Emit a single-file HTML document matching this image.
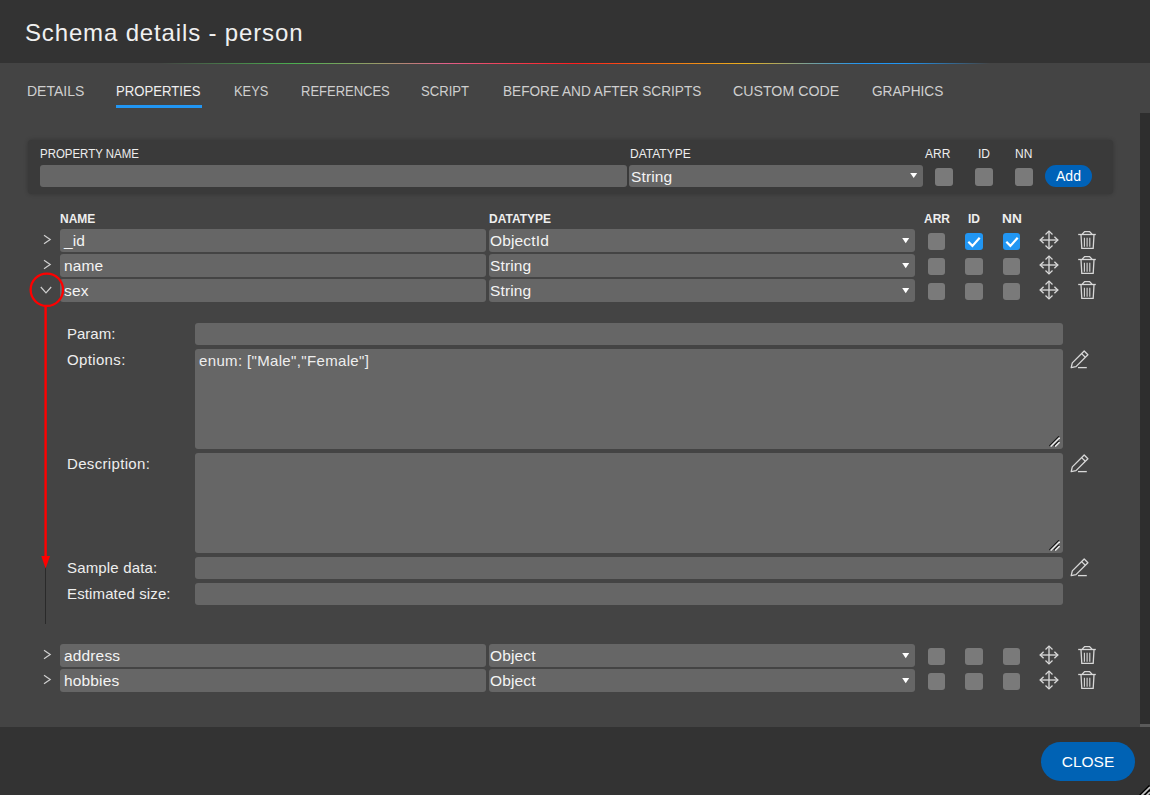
<!DOCTYPE html>
<html><head><meta charset="utf-8">
<style>
*{box-sizing:border-box;margin:0;padding:0}
html,body{width:1150px;height:795px;overflow:hidden;background:#333333;font-family:"Liberation Sans",sans-serif;color:#eeeeee}
.abs{position:absolute}
#hdr{left:0;top:0;width:1150px;height:63px;background:#333333}
#title{left:25px;top:18px;font-size:24px;line-height:30px;color:#f0f0f0;white-space:nowrap;letter-spacing:0.85px}
#grad{left:0;top:63px;width:1150px;height:1px;background:linear-gradient(to right,rgba(76,175,80,0) 160px,#4caf50 295px,#9a9a6a 380px,#e0608a 445px,#ff1c1c 575px,#f47810 670px,#e8b020 745px,#80a090 805px,#2196f3 860px,#2196f3 905px,rgba(33,150,243,0) 990px)}
#content{left:0;top:63px;width:1150px;height:664px;background:#444444}
#sb{left:1140px;top:113px;width:10px;height:614px;background:#2e2e2e}
#sbb{left:1140px;top:724px;width:10px;height:3px;background:#5a5a5a}
#footer{left:0;top:727px;width:1150px;height:68px;background:#333333}
.tab{position:absolute;font-size:15.5px;line-height:18px;color:#cfcfcf;white-space:nowrap}
.tab.act{color:#f0f0f0}
#uline{left:116px;top:105px;width:86px;height:3px;background:#2196f3}
#panel{left:28px;top:140px;width:1085px;height:54px;background:#3a3a3a;border-radius:4px;box-shadow:0 0 4px rgba(0,0,0,0.25)}
.lbl{position:absolute;font-size:12px;line-height:14px;color:#eeeeee;white-space:nowrap}
.lblb{font-weight:bold}
.inp{position:absolute;background:#666666;border-radius:3px;height:22px}
.txt{position:absolute;font-size:15.5px;line-height:20px;color:#f4f4f4;white-space:nowrap;letter-spacing:0.15px}
.cb{position:absolute;width:18px;height:18px;background:#7a7a7a;border-radius:3px}
.cb.on{background:#2196f3}
.arrow{position:absolute;width:0;height:0;border-left:3.5px solid transparent;border-right:3.5px solid transparent;border-top:6px solid #ffffff}
#add{left:1045px;top:165px;width:47px;height:22px;background:#0062b8;border-radius:11px;color:#fff;font-size:14px;line-height:22px;text-align:center}
#close{left:1041px;top:742px;width:94px;height:39px;background:#0062b4;border-radius:20px;color:#fff;font-size:15.5px;line-height:39px;text-align:center}
.flbl{position:absolute;font-size:15px;line-height:18px;color:#eeeeee;white-space:nowrap}
</style></head><body>
<div id="hdr" class="abs"></div>
<div id="title" class="abs">Schema details - person</div>
<div id="content" class="abs"></div>
<div id="grad" class="abs"></div>
<div id="sb" class="abs"></div>
<div id="sbb" class="abs"></div>
<div id="footer" class="abs"></div>
<div class="tab" style="left:27px;top:81.5px;transform:scaleX(0.9029);transform-origin:0 0;">DETAILS</div>
<div class="tab act" style="left:116px;top:81.5px;transform:scaleX(0.8477);transform-origin:0 0;">PROPERTIES</div>
<div class="tab" style="left:234px;top:81.5px;transform:scaleX(0.8313);transform-origin:0 0;">KEYS</div>
<div class="tab" style="left:301px;top:81.5px;transform:scaleX(0.8381);transform-origin:0 0;">REFERENCES</div>
<div class="tab" style="left:421px;top:81.5px;transform:scaleX(0.8448);transform-origin:0 0;">SCRIPT</div>
<div class="tab" style="left:503px;top:81.5px;transform:scaleX(0.8787);transform-origin:0 0;">BEFORE AND AFTER SCRIPTS</div>
<div class="tab" style="left:733px;top:81.5px;transform:scaleX(0.9155);transform-origin:0 0;">CUSTOM CODE</div>
<div class="tab" style="left:872px;top:81.5px;transform:scaleX(0.8806);transform-origin:0 0;">GRAPHICS</div>
<div id="uline" class="abs"></div>
<div id="panel" class="abs"></div>
<div class="lbl" style="left:40px;top:147px;transform:scaleX(0.954);transform-origin:0 0;">PROPERTY NAME</div>
<div class="lbl" style="left:630px;top:147px">DATATYPE</div>
<div class="lbl" style="left:925px;top:147px">ARR</div>
<div class="lbl" style="left:978px;top:147px">ID</div>
<div class="lbl" style="left:1015px;top:147px">NN</div>
<div class="inp" style="left:40px;top:165px;width:587px"></div>
<div class="inp" style="left:629px;top:165px;width:294px"></div>
<div class="txt" style="left:631px;top:167px">String</div>
<svg class="abs" style="left:0;top:0;overflow:visible" width="1" height="1"><polygon points="910.2,172.9 917.2,172.9 913.7,178.1" fill="#fff"/></svg>
<div class="cb" style="left:935px;top:168px;width:18px;height:18px"></div>
<div class="cb" style="left:975px;top:168px;width:18px;height:18px"></div>
<div class="cb" style="left:1015px;top:168px;width:18px;height:18px"></div>
<div id="add" class="abs">Add</div>
<div class="lblb lbl" style="left:60px;top:212px">NAME</div>
<div class="lblb lbl" style="left:489px;top:212px">DATATYPE</div>
<div class="lblb lbl" style="left:924px;top:212px">ARR</div>
<div class="lblb lbl" style="left:968px;top:212px">ID</div>
<div class="lblb lbl" style="left:1002px;top:212px;transform:scaleX(1.14);transform-origin:0 0">NN</div>
<svg class="abs" style="left:42.5px;top:233.7px" width="9" height="11" viewBox="0 0 9 11"><polyline points="1,1.2 7.2,5.5 1,9.8" fill="none" stroke="#cfcfcf" stroke-width="1.2"/></svg>
<div class="inp" style="left:60px;top:229px;width:426px;height:22.5px"></div>
<div class="txt" style="left:64px;top:230.5px">_id</div>
<div class="inp" style="left:489px;top:229px;width:426px;height:22.5px"></div>
<div class="txt" style="left:490px;top:231px">ObjectId</div>
<svg class="abs" style="left:0;top:0;overflow:visible" width="1" height="1"><polygon points="902.2,238 909.2,238 905.7,243.2" fill="#fff"/></svg>
<div class="cb" style="left:928px;top:233px;width:17px;height:17px"></div>
<div class="cb on" style="left:965px;top:233px;width:18px;height:17px"><svg width="17" height="17" viewBox="0 0 17 17" style="position:absolute;left:0;top:0"><polyline points="3.3,8.8 7.4,12.9 14.7,4.7" fill="none" stroke="#fff" stroke-width="2.2"/></svg></div>
<div class="cb on" style="left:1003px;top:233px;width:17px;height:17px"><svg width="17" height="17" viewBox="0 0 17 17" style="position:absolute;left:0;top:0"><polyline points="3.3,8.8 7.4,12.9 14.7,4.7" fill="none" stroke="#fff" stroke-width="2.2"/></svg></div>
<svg class="abs" style="left:1039px;top:230px" width="20" height="20" viewBox="0 0 20 20"><g fill="none" stroke="#d8d8d8" stroke-width="1.35" stroke-linecap="butt" stroke-linejoin="miter"><line x1="0.9" y1="10" x2="19.1" y2="10"/><line x1="10" y1="0.9" x2="10" y2="19.1"/><polyline points="4.6,6.7 1.2,10 4.6,13.3"/><polyline points="15.4,6.7 18.8,10 15.4,13.3"/><polyline points="6.5,4.4 10,1.1 13.5,4.4"/><polyline points="6.5,15.6 10,18.9 13.5,15.6"/></g></svg>
<svg class="abs" style="left:1078px;top:229.8px" width="19" height="20" viewBox="0 0 19 20"><g fill="none" stroke="#d8d8d8" stroke-width="1.3" stroke-linejoin="miter"><path d="M4.2,4.2 L6.6,1.6 H11.6 L14,4.2"/><line x1="0.2" y1="4.5" x2="17.8" y2="4.5"/><path d="M3,4.7 L3.8,18.3 H15.2 L16,4.7"/><line x1="6.4" y1="7.7" x2="6.4" y2="16.7" stroke-width="1.1"/><line x1="9.1" y1="7.7" x2="9.1" y2="16.7" stroke-width="1.1"/><line x1="11.8" y1="7.7" x2="11.8" y2="16.7" stroke-width="1.1"/></g></svg>
<svg class="abs" style="left:42.5px;top:258.7px" width="9" height="11" viewBox="0 0 9 11"><polyline points="1,1.2 7.2,5.5 1,9.8" fill="none" stroke="#cfcfcf" stroke-width="1.2"/></svg>
<div class="inp" style="left:60px;top:254px;width:426px;height:22.5px"></div>
<div class="txt" style="left:64px;top:255.5px">name</div>
<div class="inp" style="left:489px;top:254px;width:426px;height:22.5px"></div>
<div class="txt" style="left:490px;top:256px">String</div>
<svg class="abs" style="left:0;top:0;overflow:visible" width="1" height="1"><polygon points="902.2,263 909.2,263 905.7,268.2" fill="#fff"/></svg>
<div class="cb" style="left:928px;top:258px;width:17px;height:17px"></div>
<div class="cb" style="left:965px;top:258px;width:18px;height:17px"></div>
<div class="cb" style="left:1003px;top:258px;width:17px;height:17px"></div>
<svg class="abs" style="left:1039px;top:255px" width="20" height="20" viewBox="0 0 20 20"><g fill="none" stroke="#d8d8d8" stroke-width="1.35" stroke-linecap="butt" stroke-linejoin="miter"><line x1="0.9" y1="10" x2="19.1" y2="10"/><line x1="10" y1="0.9" x2="10" y2="19.1"/><polyline points="4.6,6.7 1.2,10 4.6,13.3"/><polyline points="15.4,6.7 18.8,10 15.4,13.3"/><polyline points="6.5,4.4 10,1.1 13.5,4.4"/><polyline points="6.5,15.6 10,18.9 13.5,15.6"/></g></svg>
<svg class="abs" style="left:1078px;top:254.8px" width="19" height="20" viewBox="0 0 19 20"><g fill="none" stroke="#d8d8d8" stroke-width="1.3" stroke-linejoin="miter"><path d="M4.2,4.2 L6.6,1.6 H11.6 L14,4.2"/><line x1="0.2" y1="4.5" x2="17.8" y2="4.5"/><path d="M3,4.7 L3.8,18.3 H15.2 L16,4.7"/><line x1="6.4" y1="7.7" x2="6.4" y2="16.7" stroke-width="1.1"/><line x1="9.1" y1="7.7" x2="9.1" y2="16.7" stroke-width="1.1"/><line x1="11.8" y1="7.7" x2="11.8" y2="16.7" stroke-width="1.1"/></g></svg>
<svg class="abs" style="left:40px;top:286px" width="12" height="8" viewBox="0 0 12 8"><polyline points="0.8,1 6,6.8 11.2,1" fill="none" stroke="#cfcfcf" stroke-width="1.2"/></svg>
<div class="inp" style="left:60px;top:279px;width:426px;height:22.5px"></div>
<div class="txt" style="left:64px;top:280.5px">sex</div>
<div class="inp" style="left:489px;top:279px;width:426px;height:22.5px"></div>
<div class="txt" style="left:490px;top:281px">String</div>
<svg class="abs" style="left:0;top:0;overflow:visible" width="1" height="1"><polygon points="902.2,288 909.2,288 905.7,293.2" fill="#fff"/></svg>
<div class="cb" style="left:928px;top:283px;width:17px;height:17px"></div>
<div class="cb" style="left:965px;top:283px;width:18px;height:17px"></div>
<div class="cb" style="left:1003px;top:283px;width:17px;height:17px"></div>
<svg class="abs" style="left:1039px;top:280px" width="20" height="20" viewBox="0 0 20 20"><g fill="none" stroke="#d8d8d8" stroke-width="1.35" stroke-linecap="butt" stroke-linejoin="miter"><line x1="0.9" y1="10" x2="19.1" y2="10"/><line x1="10" y1="0.9" x2="10" y2="19.1"/><polyline points="4.6,6.7 1.2,10 4.6,13.3"/><polyline points="15.4,6.7 18.8,10 15.4,13.3"/><polyline points="6.5,4.4 10,1.1 13.5,4.4"/><polyline points="6.5,15.6 10,18.9 13.5,15.6"/></g></svg>
<svg class="abs" style="left:1078px;top:279.8px" width="19" height="20" viewBox="0 0 19 20"><g fill="none" stroke="#d8d8d8" stroke-width="1.3" stroke-linejoin="miter"><path d="M4.2,4.2 L6.6,1.6 H11.6 L14,4.2"/><line x1="0.2" y1="4.5" x2="17.8" y2="4.5"/><path d="M3,4.7 L3.8,18.3 H15.2 L16,4.7"/><line x1="6.4" y1="7.7" x2="6.4" y2="16.7" stroke-width="1.1"/><line x1="9.1" y1="7.7" x2="9.1" y2="16.7" stroke-width="1.1"/><line x1="11.8" y1="7.7" x2="11.8" y2="16.7" stroke-width="1.1"/></g></svg>
<svg class="abs" style="left:42.5px;top:648.7px" width="9" height="11" viewBox="0 0 9 11"><polyline points="1,1.2 7.2,5.5 1,9.8" fill="none" stroke="#cfcfcf" stroke-width="1.2"/></svg>
<div class="inp" style="left:60px;top:644px;width:426px;height:22.5px"></div>
<div class="txt" style="left:64px;top:645.5px">address</div>
<div class="inp" style="left:489px;top:644px;width:426px;height:22.5px"></div>
<div class="txt" style="left:490px;top:646px">Object</div>
<svg class="abs" style="left:0;top:0;overflow:visible" width="1" height="1"><polygon points="902.2,653 909.2,653 905.7,658.2" fill="#fff"/></svg>
<div class="cb" style="left:928px;top:648px;width:17px;height:17px"></div>
<div class="cb" style="left:965px;top:648px;width:18px;height:17px"></div>
<div class="cb" style="left:1003px;top:648px;width:17px;height:17px"></div>
<svg class="abs" style="left:1039px;top:645px" width="20" height="20" viewBox="0 0 20 20"><g fill="none" stroke="#d8d8d8" stroke-width="1.35" stroke-linecap="butt" stroke-linejoin="miter"><line x1="0.9" y1="10" x2="19.1" y2="10"/><line x1="10" y1="0.9" x2="10" y2="19.1"/><polyline points="4.6,6.7 1.2,10 4.6,13.3"/><polyline points="15.4,6.7 18.8,10 15.4,13.3"/><polyline points="6.5,4.4 10,1.1 13.5,4.4"/><polyline points="6.5,15.6 10,18.9 13.5,15.6"/></g></svg>
<svg class="abs" style="left:1078px;top:644.8px" width="19" height="20" viewBox="0 0 19 20"><g fill="none" stroke="#d8d8d8" stroke-width="1.3" stroke-linejoin="miter"><path d="M4.2,4.2 L6.6,1.6 H11.6 L14,4.2"/><line x1="0.2" y1="4.5" x2="17.8" y2="4.5"/><path d="M3,4.7 L3.8,18.3 H15.2 L16,4.7"/><line x1="6.4" y1="7.7" x2="6.4" y2="16.7" stroke-width="1.1"/><line x1="9.1" y1="7.7" x2="9.1" y2="16.7" stroke-width="1.1"/><line x1="11.8" y1="7.7" x2="11.8" y2="16.7" stroke-width="1.1"/></g></svg>
<svg class="abs" style="left:42.5px;top:673.7px" width="9" height="11" viewBox="0 0 9 11"><polyline points="1,1.2 7.2,5.5 1,9.8" fill="none" stroke="#cfcfcf" stroke-width="1.2"/></svg>
<div class="inp" style="left:60px;top:669px;width:426px;height:22.5px"></div>
<div class="txt" style="left:64px;top:670.5px">hobbies</div>
<div class="inp" style="left:489px;top:669px;width:426px;height:22.5px"></div>
<div class="txt" style="left:490px;top:671px">Object</div>
<svg class="abs" style="left:0;top:0;overflow:visible" width="1" height="1"><polygon points="902.2,678 909.2,678 905.7,683.2" fill="#fff"/></svg>
<div class="cb" style="left:928px;top:673px;width:17px;height:17px"></div>
<div class="cb" style="left:965px;top:673px;width:18px;height:17px"></div>
<div class="cb" style="left:1003px;top:673px;width:17px;height:17px"></div>
<svg class="abs" style="left:1039px;top:670px" width="20" height="20" viewBox="0 0 20 20"><g fill="none" stroke="#d8d8d8" stroke-width="1.35" stroke-linecap="butt" stroke-linejoin="miter"><line x1="0.9" y1="10" x2="19.1" y2="10"/><line x1="10" y1="0.9" x2="10" y2="19.1"/><polyline points="4.6,6.7 1.2,10 4.6,13.3"/><polyline points="15.4,6.7 18.8,10 15.4,13.3"/><polyline points="6.5,4.4 10,1.1 13.5,4.4"/><polyline points="6.5,15.6 10,18.9 13.5,15.6"/></g></svg>
<svg class="abs" style="left:1078px;top:669.8px" width="19" height="20" viewBox="0 0 19 20"><g fill="none" stroke="#d8d8d8" stroke-width="1.3" stroke-linejoin="miter"><path d="M4.2,4.2 L6.6,1.6 H11.6 L14,4.2"/><line x1="0.2" y1="4.5" x2="17.8" y2="4.5"/><path d="M3,4.7 L3.8,18.3 H15.2 L16,4.7"/><line x1="6.4" y1="7.7" x2="6.4" y2="16.7" stroke-width="1.1"/><line x1="9.1" y1="7.7" x2="9.1" y2="16.7" stroke-width="1.1"/><line x1="11.8" y1="7.7" x2="11.8" y2="16.7" stroke-width="1.1"/></g></svg>

<div class="flbl" style="left:67px;top:325px">Param:</div>
<div class="inp" style="left:195px;top:323px;width:868px"></div>
<div class="flbl" style="left:67px;top:351px;letter-spacing:0.35px">Options:</div>
<div class="inp" style="left:195px;top:349px;width:868px;height:100px"></div>
<div class="flbl" style="left:199px;top:352px;letter-spacing:0.35px">enum: ["Male","Female"]</div>
<svg class="abs" style="left:1049px;top:436px" width="11" height="11" viewBox="0 0 11 11"><g stroke-width="1.5"><line x1="0.5" y1="10" x2="10" y2="0.5" stroke="#111"/><line x1="1.6" y1="10.6" x2="10.6" y2="1.6" stroke="#e8e8e8"/><line x1="5" y1="10" x2="10" y2="5" stroke="#111"/><line x1="6.1" y1="10.6" x2="10.6" y2="6.1" stroke="#e8e8e8"/></g></svg>
<svg class="abs" style="left:1070px;top:349px" width="20" height="20" viewBox="0 0 20 20"><g fill="none" stroke="#d8d8d8" stroke-width="1.3" stroke-linejoin="round"><path d="M1.2,18.6 L2.3,13.9 L14.2,2 L17.9,5.7 L6,17.6 Z"/><line x1="11.6" y1="4.6" x2="15.3" y2="8.3"/><line x1="8" y1="18.6" x2="16.8" y2="18.6"/></g></svg>
<div class="flbl" style="left:67px;top:455px;letter-spacing:0.33px">Description:</div>
<div class="inp" style="left:195px;top:453px;width:868px;height:100px"></div>
<svg class="abs" style="left:1049px;top:540px" width="11" height="11" viewBox="0 0 11 11"><g stroke-width="1.5"><line x1="0.5" y1="10" x2="10" y2="0.5" stroke="#111"/><line x1="1.6" y1="10.6" x2="10.6" y2="1.6" stroke="#e8e8e8"/><line x1="5" y1="10" x2="10" y2="5" stroke="#111"/><line x1="6.1" y1="10.6" x2="10.6" y2="6.1" stroke="#e8e8e8"/></g></svg>
<svg class="abs" style="left:1070px;top:453px" width="20" height="20" viewBox="0 0 20 20"><g fill="none" stroke="#d8d8d8" stroke-width="1.3" stroke-linejoin="round"><path d="M1.2,18.6 L2.3,13.9 L14.2,2 L17.9,5.7 L6,17.6 Z"/><line x1="11.6" y1="4.6" x2="15.3" y2="8.3"/><line x1="8" y1="18.6" x2="16.8" y2="18.6"/></g></svg>
<div class="flbl" style="left:67px;top:559px;letter-spacing:0.17px">Sample data:</div>
<div class="inp" style="left:195px;top:557px;width:868px"></div>
<svg class="abs" style="left:1070px;top:557px" width="20" height="20" viewBox="0 0 20 20"><g fill="none" stroke="#d8d8d8" stroke-width="1.3" stroke-linejoin="round"><path d="M1.2,18.6 L2.3,13.9 L14.2,2 L17.9,5.7 L6,17.6 Z"/><line x1="11.6" y1="4.6" x2="15.3" y2="8.3"/><line x1="8" y1="18.6" x2="16.8" y2="18.6"/></g></svg>
<div class="flbl" style="left:67px;top:585px;letter-spacing:0.13px">Estimated size:</div>
<div class="inp" style="left:195px;top:583px;width:868px"></div>
<div class="abs" style="left:45px;top:307px;width:1px;height:317px;background:#2a2a2a"></div>

<div id="close" class="abs">CLOSE</div>
<svg class="abs" style="left:1138px;top:784px" width="12" height="11" viewBox="0 0 12 11"><g stroke-width="1.6"><line x1="1.5" y1="11.5" x2="11.5" y2="1.5" stroke="#000"/><line x1="3" y1="12" x2="12" y2="3" stroke="#c8c8c8"/><line x1="6.5" y1="11.5" x2="12" y2="6" stroke="#000"/><line x1="8" y1="12" x2="12" y2="8" stroke="#c8c8c8"/></g></svg>
<svg class="abs" style="left:0;top:0" width="1150" height="795" viewBox="0 0 1150 795">
<circle cx="46.85" cy="289.75" r="16.2" fill="none" stroke="#ff0000" stroke-width="2.3"/>
<line x1="45.6" y1="305" x2="45.6" y2="560" stroke="#ff0000" stroke-width="2.4"/>
<polygon points="41.3,556 50,556 45.6,568.5" fill="#ff0000"/>
</svg>
</body></html>
